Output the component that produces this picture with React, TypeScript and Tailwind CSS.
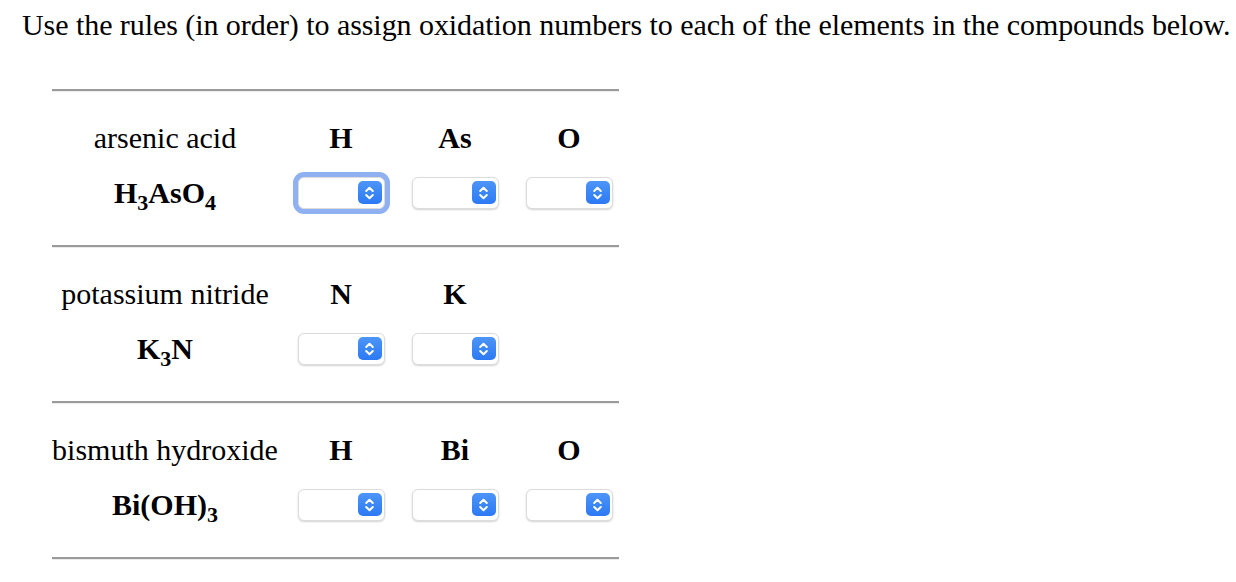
import React from "react";

type Compound = {
  name: string;
  formula: React.ReactNode;
  elements: string[];
};

const compounds: Compound[] = [
  {
    name: "arsenic acid",
    formula: (
      <>
        H<sub className="text-[22px] relative top-[7px] align-baseline">3</sub>AsO
        <sub className="text-[22px] relative top-[7px] align-baseline">4</sub>
      </>
    ),
    elements: ["H", "As", "O"],
  },
  {
    name: "potassium nitride",
    formula: (
      <>
        K<sub className="text-[22px] relative top-[7px] align-baseline">3</sub>N
      </>
    ),
    elements: ["N", "K"],
  },
  {
    name: "bismuth hydroxide",
    formula: (
      <>
        Bi(OH)<sub className="text-[22px] relative top-[7px] align-baseline">3</sub>
      </>
    ),
    elements: ["H", "Bi", "O"],
  },
];

function Rule() {
  return <div className="w-[567px] h-[3px] border-t-2 border-[#9b9b9b] bg-[#ececec]" />;
}

function Picker({ focused }: { focused?: boolean }) {
  return (
    <div
      className={
        "relative w-[87px] h-[32px] rounded-[6px] bg-white border border-[#dcdcdc] shadow-[0_1px_2px_rgba(0,0,0,0.18)] " +
        (focused ? "ring-[5px] ring-[#8fb0f1] border-[#8fb0f1]" : "")
      }
    >
      <select className="w-full h-full appearance-none bg-transparent outline-none" defaultValue="">
        <option value=""></option>
        <option value="-3">-3</option>
        <option value="-2">-2</option>
        <option value="-1">-1</option>
        <option value="0">0</option>
        <option value="+1">+1</option>
        <option value="+2">+2</option>
        <option value="+3">+3</option>
        <option value="+5">+5</option>
      </select>
      <div className="pointer-events-none absolute right-[2px] top-[3px] w-[24px] h-[23px] rounded-[5px] bg-gradient-to-b from-[#4d95f8] to-[#2c79f4] flex items-center justify-center">
        <svg width="11" height="16" viewBox="0 0 11 16" fill="none">
          <path d="M2.2 6 L5.5 2.7 L8.8 6" stroke="white" strokeWidth="2" strokeLinecap="round" strokeLinejoin="round" />
          <path d="M2.2 10 L5.5 13.3 L8.8 10" stroke="white" strokeWidth="2" strokeLinecap="round" strokeLinejoin="round" />
        </svg>
      </div>
    </div>
  );
}

export default function App() {
  return (
    <div className="bg-white min-h-screen text-black font-['Liberation_Serif','Times_New_Roman',serif]">
      <p className="pl-[22px] pt-[7px] text-[30px] leading-[36px] tracking-[-0.06px] whitespace-nowrap">
        Use the rules (in order) to assign oxidation numbers to each of the elements in the compounds below.
      </p>

      <div className="ml-[52px] mt-[46px]">
        <Rule />
        {compounds.map((c, i) => (
          <div key={c.name}>
            <div className="pt-[29px] pb-[35px] grid grid-cols-[232px_114px_114px_114px] grid-rows-[34px_34px] gap-y-[21px] items-center">
              <div className="text-center pr-[6px] text-[30px] leading-[34px] whitespace-nowrap">{c.name}</div>
              {[0, 1, 2].map((k) => (
                <div key={k} className="text-center text-[30px] leading-[34px] font-bold">
                  {c.elements[k] ?? ""}
                </div>
              ))}
              <div className="text-center pr-[6px] text-[30px] leading-[34px] font-bold whitespace-nowrap">
                {c.formula}
              </div>
              {[0, 1, 2].map((k) => (
                <div key={k} className="flex justify-center">
                  {c.elements[k] ? <Picker focused={i === 0 && k === 0} /> : null}
                </div>
              ))}
            </div>
            <Rule />
          </div>
        ))}
      </div>
    </div>
  );
}
